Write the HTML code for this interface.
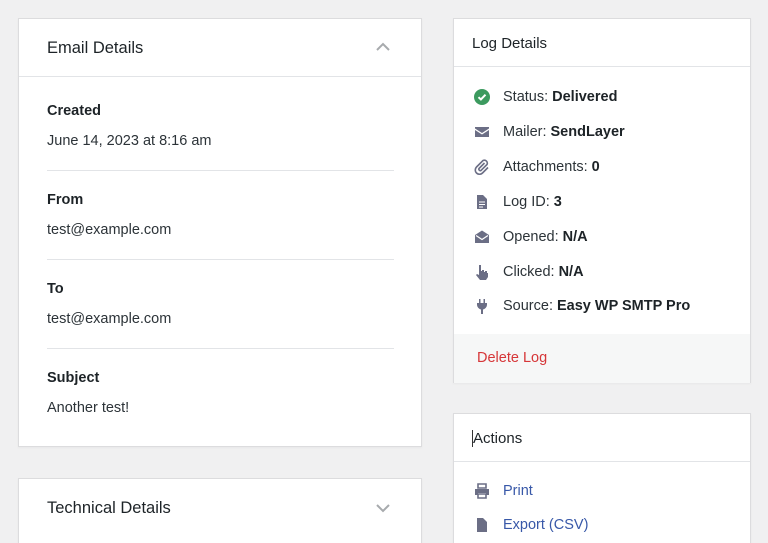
<!DOCTYPE html>
<html style="width:768px;height:543px;overflow:hidden"><head><style>
*{margin:0;padding:0;box-sizing:border-box}
body{width:768px;height:543px;overflow:hidden;background:#f0f0f1;font-family:"Liberation Sans",sans-serif;color:#1d2327;position:relative}
.card{position:absolute;background:#fff;border:1px solid #dcdcde;box-shadow:0 1px 2px rgba(0,0,0,.04)}
.abs{position:absolute;white-space:nowrap}
.t{font-size:16.5px;color:#1d2327}
.lab{font-size:14.5px;font-weight:bold;color:#1d2327}
.val{font-size:14.5px;color:#2c3338}
.hr{position:absolute;height:1px;background:#e2e4e7}
.row{position:absolute;left:20px;font-size:14.5px;color:#2c3338;display:flex;align-items:center;white-space:nowrap}
.row svg{width:16px;height:16px;margin-right:13px;fill:#6b6e85}
.row b{color:#1d2327;margin-left:4px}
</style></head><body>

<div class="card" style="left:18px;top:18px;width:404px;height:429px">
 <div class="abs t" style="left:28px;top:20px">Email Details</div>
 <svg class="abs" style="left:357px;top:23px" width="14" height="10" viewBox="0 0 14 10"><path d="M1 8L7 2L13 8" stroke="#a7aaad" stroke-width="2" fill="none"/></svg>
 <div class="hr" style="left:0;right:0;top:57px"></div>
 <div class="abs lab" style="left:28px;top:84px">Created</div>
 <div class="abs val" style="left:28px;top:114px">June 14, 2023 at 8:16 am</div>
 <div class="hr" style="left:28px;width:347px;top:151px"></div>
 <div class="abs lab" style="left:28px;top:173px">From</div>
 <div class="abs val" style="left:28px;top:203px">test@example.com</div>
 <div class="hr" style="left:28px;width:347px;top:240px"></div>
 <div class="abs lab" style="left:28px;top:262px">To</div>
 <div class="abs val" style="left:28px;top:292px">test@example.com</div>
 <div class="hr" style="left:28px;width:347px;top:329px"></div>
 <div class="abs lab" style="left:28px;top:351px">Subject</div>
 <div class="abs val" style="left:28px;top:381px">Another test!</div>
</div>

<div class="card" style="left:18px;top:478px;width:404px;height:80px">
 <div class="abs t" style="left:28px;top:20px">Technical Details</div>
 <svg class="abs" style="left:357px;top:24px" width="14" height="10" viewBox="0 0 14 10"><path d="M1 2L7 8L13 2" stroke="#a7aaad" stroke-width="2" fill="none"/></svg>
</div>

<div class="card" style="left:453px;top:18px;width:298px;height:365px">
 <div class="abs" style="left:18px;top:16px;font-size:15px">Log Details</div>
 <div class="hr" style="left:0;right:0;top:47px"></div>
 <div class="row" style="top:70px"><svg viewBox="0 0 16 16"><circle cx="8" cy="8" r="8" fill="#3c9a5f"/><path d="M4.5 8.2l2.4 2.3 4.6-4.8" stroke="#fff" stroke-width="2" fill="none"/></svg>Status:<b>Delivered</b></div>
 <div class="row" style="top:105px"><svg viewBox="0 0 16 16"><path d="M1 3h14v1.5L8 9 1 4.5z"/><path d="M1 6l7 4.5L15 6v7H1z"/></svg>Mailer:<b>SendLayer</b></div>
 <div class="row" style="top:140px"><svg viewBox="0 0 16 16"><path d="M10.5 4L5 9.5a1.5 1.5 0 002 2L13 5.5a3 3 0 00-4-4L2.5 8a4.2 4.2 0 006 6L14 8.5" stroke="#6b6e85" stroke-width="1.6" fill="none"/></svg>Attachments:<b>0</b></div>
 <div class="row" style="top:175px"><svg viewBox="0 0 16 16"><path d="M3 1h6l4 4v10H3z"/><path d="M5 8h6M5 10.5h6M5 13h4" stroke="#fff" stroke-width="1"/></svg>Log ID:<b>3</b></div>
 <div class="row" style="top:210px"><svg viewBox="0 0 16 16"><path d="M1 6L8 1.5 15 6v8H1z"/><path d="M2 6.5l6 4 6-4" stroke="#fff" stroke-width="1.2" fill="none"/></svg>Opened:<b>N/A</b></div>
 <div class="row" style="top:245px"><svg viewBox="0 0 16 16"><path d="M5 1h2v6h1V6h2v2h1V7h2v2h1v4l-2 3H6l-4-5 1-1 2 1z"/></svg>Clicked:<b>N/A</b></div>
 <div class="row" style="top:279px"><svg viewBox="0 0 16 16"><path d="M5 1h1.5v4h3V1H11v4h2v2a5 5 0 01-4 4.5V16H7v-4.5A5 5 0 013 7V5h2z"/></svg>Source:<b>Easy WP SMTP Pro</b></div>
 <div class="abs" style="left:0;right:0;top:315px;height:49px;background:#f6f7f7"></div>
 <div class="abs" style="left:23px;top:331px;font-size:14.5px;color:#d63638">Delete Log</div>
</div>

<div class="card" style="left:453px;top:413px;width:298px;height:140px">
 <div class="abs" style="left:18px;top:16px;font-size:15px;border-left:1px solid #333">Actions</div>
 <div class="hr" style="left:0;right:0;top:47px"></div>
 <div class="row" style="top:69px;color:#3858a8"><svg viewBox="0 0 16 16"><path d="M4 1h8v4H4z" fill="none" stroke="#6b6e85" stroke-width="1.6"/><path d="M1 6h14v6h-3v-2H4v2H1z"/><path d="M4 11h8v4H4z" fill="none" stroke="#6b6e85" stroke-width="1.6"/></svg>Print</div>
 <div class="row" style="top:103px;color:#3858a8"><svg viewBox="0 0 16 16"><path d="M3 1h6l4 4v10H3z"/></svg>Export (CSV)</div>
</div>
</body></html>
